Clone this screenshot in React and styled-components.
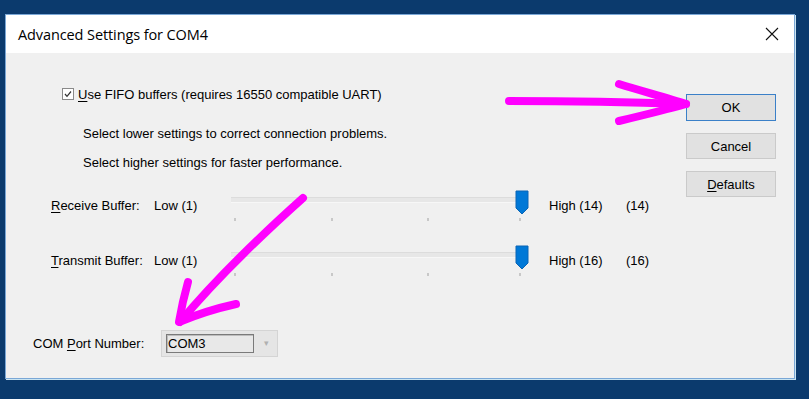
import React from 'react'
import styled, { createGlobalStyle } from 'styled-components'

const GlobalStyle = createGlobalStyle`
  html, body { margin: 0; padding: 0; }
  body {
    background: #0b3a6d;
    width: 809px;
    height: 399px;
    overflow: hidden;
    font-family: "Liberation Sans", Arial, sans-serif;
  }
`

const Screen = styled.div`
  position: relative;
  width: 809px;
  height: 399px;
  padding: 14px 0 0 5px;
  box-sizing: border-box;
`

const Dialog = styled.div`
  width: 790px;
  height: 365px;
  box-sizing: border-box;
  border: 1px solid #7aa7d6;
  background: #f0f0f0;
  display: flex;
  flex-direction: column;
  box-shadow: 1px 1px 0 #c9e4f2;
`

const TitleBar = styled.div`
  height: 38px;
  background: #fff;
  display: flex;
  align-items: center;
  justify-content: space-between;
  padding: 0 14px 0 12px;
`

const Title = styled.div`
  font-family: "Open Sans", "Noto Sans", sans-serif;
  font-size: 14.5px;
  color: #000;
  letter-spacing: -0.1px;
`

const Close = styled.div`
  width: 16px;
  height: 16px;
  display: flex;
  align-items: center;
  justify-content: center;
`

const Body = styled.div`
  flex: 1;
  display: flex;
  font-size: 13px;
  color: #000;
`

const Main = styled.div`
  flex: 1;
  display: flex;
  flex-direction: column;
`

const CheckRow = styled.div`
  display: flex;
  align-items: center;
  gap: 4px;
  margin: 33px 0 0 56px;
  height: 16px;
`

const Box = styled.div`
  width: 10px;
  height: 10px;
  border: 1px solid #8a8a8a;
  background: #fff;
  display: flex;
  align-items: center;
  justify-content: center;
`

const Info = styled.div`
  margin-left: 77px;
  margin-top: ${p => p.top}px;
  height: 16px;
  line-height: 16px;
`

const SliderRow = styled.div`
  display: grid;
  grid-template-columns: 103px 75px 300px 20px 77px auto;
  align-items: center;
  margin-left: 45px;
  margin-top: ${p => p.top}px;
  height: 26px;
`

const Key = styled.span`
  text-decoration: underline;
  text-underline-offset: 2px;
`

const Slider = styled.div`
  position: relative;
  height: 26px;
`

const Track = styled.div`
  position: absolute;
  left: 2px;
  right: 6px;
  top: 5px;
  height: 4px;
  background: #e7e7e7;
  border-top: 1px solid #dcdcdc;
  border-bottom: 1px solid #f7f7f7;
`

const Tick = styled.div`
  position: absolute;
  top: 26px;
  width: 2px;
  height: 3px;
  background: #c8c8c8;
`

const Thumb = styled.svg`
  position: absolute;
  right: 0;
  top: -2px;
`

const ComRow = styled.div`
  display: flex;
  align-items: center;
  margin: 56px 0 0 27px;
  height: 28px;
`

const ComLabel = styled.div`
  width: 128px;
`

const Combo = styled.div`
  width: 117px;
  height: 27px;
  box-sizing: border-box;
  border: 1px solid #d4d4d4;
  background: #e5e5e5;
  display: flex;
  align-items: center;
  padding: 0 4px;
  gap: 6px;
`

const ComInput = styled.div`
  width: 88px;
  height: 19px;
  box-sizing: border-box;
  border: 1px solid #7a7a7a;
  box-shadow: inset 1px 1px 0 #bdbdbd;
  background: #e8e8e8;
  font-size: 13px;
  line-height: 17px;
  padding-left: 1px;
`

const Caret = styled.div`
  font-size: 9px;
  color: #b0b0b0;
  margin-left: 4px;
`

const Buttons = styled.div`
  width: 108px;
  display: flex;
  flex-direction: column;
  gap: 12px;
  padding-top: 41px;
`

const Button = styled.div`
  width: 90px;
  height: ${p => (p.primary ? 27 : 26)}px;
  box-sizing: border-box;
  border: 1px solid ${p => (p.primary ? '#3b80c8' : '#cacaca')};
  background: #e1e1e1;
  display: flex;
  align-items: center;
  justify-content: center;
  font-size: 13px;
`

const Marks = styled.svg`
  position: absolute;
  left: 0;
  top: 0;
  pointer-events: none;
`

function BufferSlider() {
  return (
    <Slider>
      <Track />
      {[5, 102, 198, 290].map(x => (
        <Tick key={x} style={{ left: x }} />
      ))}
      <Thumb width="14" height="26" viewBox="0 0 14 26">
        <path d="M1 1 H13 V18 L7 24 L1 18 Z" fill="#0078d7" stroke="#0a65b5" strokeWidth="1" />
      </Thumb>
    </Slider>
  )
}

export default function App() {
  return (
    <Screen>
      <GlobalStyle />
      <Dialog>
        <TitleBar>
          <Title>Advanced Settings for COM4</Title>
          <Close>
            <svg width="14" height="14" viewBox="0 0 14 14">
              <path d="M1 1 L13 13 M13 1 L1 13" stroke="#111" strokeWidth="1.1" />
            </svg>
          </Close>
        </TitleBar>
        <Body>
          <Main>
            <CheckRow>
              <Box>
                <svg width="8" height="8" viewBox="0 0 8 8">
                  <path d="M1 4 L3 6.3 L7 1.5" fill="none" stroke="#333" strokeWidth="1.2" />
                </svg>
              </Box>
              <span><Key>U</Key>se FIFO buffers (requires 16550 compatible UART)</span>
            </CheckRow>
            <Info top={24}>Select lower settings to correct connection problems.</Info>
            <Info top={13}>Select higher settings for faster performance.</Info>
            <SliderRow top={21}>
              <span><Key>R</Key>eceive Buffer:</span>
              <span>Low (1)</span>
              <BufferSlider />
              <span />
              <span>High (14)</span>
              <span>(14)</span>
            </SliderRow>
            <SliderRow top={29}>
              <span><Key>T</Key>ransmit Buffer:</span>
              <span>Low (1)</span>
              <BufferSlider />
              <span />
              <span>High (16)</span>
              <span>(16)</span>
            </SliderRow>
            <ComRow>
              <ComLabel>COM <Key>P</Key>ort Number:</ComLabel>
              <Combo>
                <ComInput>COM3</ComInput>
                <Caret>▾</Caret>
              </Combo>
            </ComRow>
          </Main>
          <Buttons>
            <Button primary>OK</Button>
            <Button>Cancel</Button>
            <Button><span><Key>D</Key>efaults</span></Button>
          </Buttons>
        </Body>
      </Dialog>
      <Marks width="809" height="399" viewBox="0 0 809 399">
        <g fill="none" stroke="#ff00ff" strokeWidth="8" strokeLinecap="round" strokeLinejoin="round">
          <path d="M509 101 C560 101 630 102 686 104" />
          <path d="M619 84 C645 92 668 98 686 104 C665 110 640 116 619 121" />
          <path d="M303 198 C265 232 215 280 180 322" />
          <path d="M188 282 C184 296 181 310 179 322 C198 314 218 308 236 304" />
        </g>
      </Marks>
    </Screen>
  )
}
